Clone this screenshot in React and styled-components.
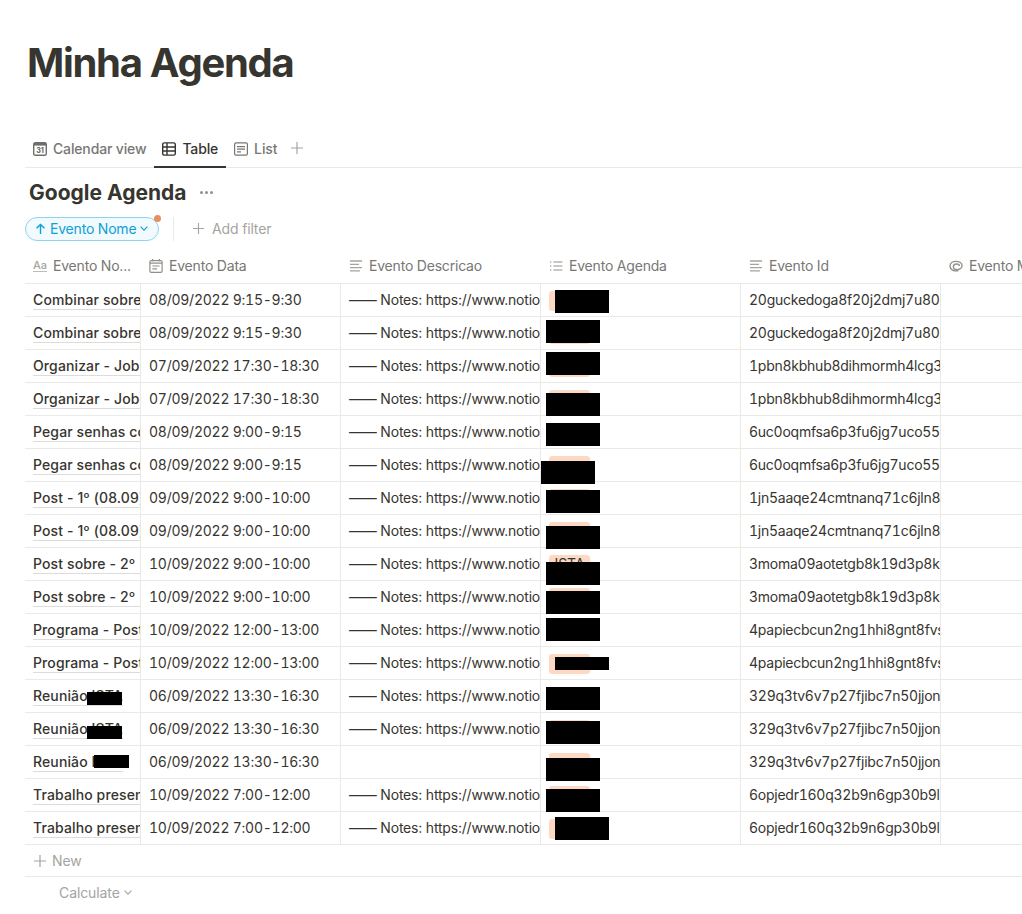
import React from 'react';
import styled, { createGlobalStyle } from 'styled-components';

const GlobalStyle = createGlobalStyle`
  html, body {
    margin: 0;
    padding: 0;
    background: #fff;
    overflow: hidden;
  }
  body {
    font-family: Inter, "Liberation Sans", sans-serif;
    color: #37352f;
  }
`;

const Page = styled.div`
  width: 1022px;
  height: 914px;
  padding: 39px 0 0 25px;
  box-sizing: border-box;
  overflow: hidden;
`;

const Title = styled.h1`
  margin: 0 0 44px 2px;
  height: 48px;
  font-size: 40px;
  line-height: 48px;
  font-weight: 700;
  letter-spacing: -1.3px;
`;

const Tabs = styled.div`
  display: flex;
  align-items: stretch;
  height: 36px;
  box-sizing: content-box;
  border-bottom: 1px solid #e9e9e7;
`;

const Tab = styled.div`
  display: flex;
  align-items: center;
  gap: 6px;
  padding: 0 8px;
  margin-bottom: -1px;
  font-size: 14px;
  font-weight: 500;
  letter-spacing: -0.15px;
  color: ${p => (p.$active ? '#37352f' : '#787774')};
  border-bottom: 2px solid ${p => (p.$active ? '#37352f' : 'transparent')};
`;

const TabAdd = styled.div`
  display: flex;
  align-items: center;
  margin-left: 5px;
  margin-bottom: 2px;
  color: #a5a4a0;
`;

const HeadingRow = styled.div`
  display: flex;
  align-items: center;
  gap: 14px;
  height: 49px;
  padding: 0 0 1px 4px;
  box-sizing: border-box;
`;

const Heading = styled.h2`
  margin: 0;
  font-size: 21px;
  font-weight: 700;
`;

const Dots = styled.div`
  display: flex;
  gap: 2px;
  margin-top: 1px;
  span {
    width: 3px;
    height: 3px;
    border-radius: 50%;
    background: #91908c;
  }
`;

const FilterRow = styled.div`
  display: flex;
  align-items: center;
  height: 24px;
  margin-bottom: 9px;
`;

const SortPill = styled.div`
  position: relative;
  display: flex;
  align-items: center;
  gap: 4px;
  width: 134px;
  height: 24px;
  padding: 0 0 1px 9px;
  box-sizing: border-box;
  border: 1px solid #8fd3ee;
  border-radius: 12px;
  background: #f1fafd;
  color: #0d9fd8;
  font-size: 14px;
  letter-spacing: -0.2px;
`;

const SortDot = styled.span`
  position: absolute;
  top: -3px;
  right: -3px;
  width: 7px;
  height: 7px;
  border-radius: 50%;
  background: #e8905c;
`;

const Divider = styled.div`
  width: 1px;
  height: 24px;
  margin: 0 18px 0 14px;
  background: #e9e9e7;
`;

const AddFilter = styled.div`
  display: flex;
  align-items: center;
  gap: 7px;
  padding-bottom: 1px;
  color: #a5a4a0;
  font-size: 14px;
  letter-spacing: -0.15px;
`;

const HeaderRow = styled.div`
  display: flex;
  height: 33px;
  box-sizing: content-box;
  border-bottom: 1px solid #e9e9e7;
`;

const HeaderCell = styled.div`
  display: flex;
  align-items: center;
  flex: none;
  gap: 6px;
  width: ${p => p.$width}px;
  padding: 0 0 2px 8px;
  box-sizing: border-box;
  color: #787774;
  font-size: 14px;
  letter-spacing: -0.2px;
  white-space: nowrap;
  overflow: hidden;
`;

const AaIcon = styled.span`
  width: 14px;
  font-size: 11px;
  line-height: 11px;
  font-weight: 500;
  letter-spacing: 0;
  color: #a5a4a0;
  border-bottom: 1px solid #bdbcb9;
`;

const Row = styled.div`
  display: flex;
  height: 33px;
  box-sizing: border-box;
  border-bottom: 1px solid #e9e9e7;
`;

const Cell = styled.div`
  position: relative;
  flex: none;
  width: ${p => p.$width}px;
  padding-left: 8px;
  box-sizing: border-box;
  border-right: 1px solid #e9e9e7;
  font-size: 14px;
  line-height: 32px;
  white-space: nowrap;
`;

const TextCell = styled(Cell)`
  overflow: hidden;
  letter-spacing: -0.2px;
`;

const NumberCell = styled(Cell)`
  overflow: hidden;
  font-variant-numeric: tabular-nums;
  letter-spacing: -0.25px;
`;

const BlankCell = styled.div`
  flex: 1;
`;

const Clip = styled.div`
  overflow: hidden;
`;

const NameText = styled.span`
  font-weight: 500;
  letter-spacing: 0.12px;
  border-bottom: 1px solid #dcdcda;
  padding-bottom: 1px;
`;

const Tag = styled.span`
  position: absolute;
  left: 8px;
  top: 7px;
  width: 41px;
  height: 20px;
  border-radius: 3px;
  background: #fdd9c4;
  font-size: 14px;
  line-height: 17px;
  text-align: center;
`;

const Redaction = styled.div`
  position: absolute;
  z-index: 2;
  left: ${p => p.$x}px;
  top: ${p => p.$y}px;
  width: ${p => p.$w}px;
  height: ${p => p.$h}px;
  background: #000;
`;

const NewRow = styled.div`
  display: flex;
  align-items: center;
  gap: 5px;
  height: 32px;
  padding-left: 8px;
  box-sizing: border-box;
  border-bottom: 1px solid #e9e9e7;
  color: #a5a4a0;
  font-size: 14px;
  letter-spacing: -0.1px;
`;

const Calculate = styled.div`
  display: flex;
  align-items: center;
  gap: 4px;
  height: 32px;
  padding: 0 0 2px 34px;
  box-sizing: border-box;
  color: #a5a4a0;
  font-size: 14px;
  letter-spacing: -0.1px;
`;

const Plus = ({ size = 14, color = 'currentColor' }) => (
  <svg width={size} height={size} viewBox="0 0 14 14" fill="none" stroke={color} strokeWidth="1.2">
    <path d="M7 1v12M1 7h12" />
  </svg>
);

const Chevron = ({ width = 8, color = 'currentColor' }) => (
  <svg width={width} height={width * 0.625} viewBox="0 0 8 5" fill="none" stroke={color} strokeWidth="1.1">
    <path d="M.6.7 4 4.1 7.4.7" />
  </svg>
);

const CalendarViewIcon = () => (
  <svg width="14" height="14" viewBox="0 0 14 14" fill="none">
    <rect x=".7" y=".7" width="12.6" height="12.6" rx="1.6" stroke="#6f6e69" strokeWidth="1.4" />
    <rect x="1" y="1" width="12" height="2.6" fill="#6f6e69" />
    <text x="7" y="11" textAnchor="middle" fontSize="7" fontWeight="800" fill="#6f6e69" fontFamily="Inter, sans-serif">31</text>
  </svg>
);

const TableIcon = () => (
  <svg width="14" height="14" viewBox="0 0 14 14" fill="none" stroke="#37352f" strokeWidth="1.4">
    <rect x=".7" y=".9" width="12.6" height="12.2" rx="1.6" />
    <path d="M.7 5h12.6M.7 9h12.6M5 .9v12.2" />
  </svg>
);

const ListViewIcon = () => (
  <svg width="14" height="14" viewBox="0 0 14 14" fill="none" stroke="#787774" strokeWidth="1.2">
    <rect x=".6" y=".9" width="12.8" height="12.2" rx="1.4" />
    <path d="M3 4.6h8M3 7.2h8M3 9.8h4" />
  </svg>
);

const DateIcon = () => (
  <svg width="14" height="14" viewBox="0 0 14 14" fill="none" stroke="#91908c" strokeWidth="1.2">
    <rect x=".9" y="1.6" width="12.2" height="11.8" rx="1.4" />
    <path d="M.9 4.2h12.2M3.6 0v2.2M10.4 0v2.2M3.4 7h7.2M3.4 9.8h4.6" />
  </svg>
);

const TextIcon = () => (
  <svg width="14" height="14" viewBox="0 0 14 14" fill="none" stroke="#a5a4a0" strokeWidth="1.3">
    <path d="M1 2h12M1 5.3h9M1 8.6h12M1 11.9h10" />
  </svg>
);

const BulletIcon = () => (
  <svg width="14" height="14" viewBox="0 0 14 14" fill="none" stroke="#91908c" strokeWidth="1.2">
    <path d="M4.4 3h9M4.4 7h9M4.4 11h9M1 3h1.4M1 7h1.4M1 11h1.4" />
  </svg>
);

const RelationIcon = () => (
  <svg width="14" height="14" viewBox="0 0 14 14" fill="none" stroke="#91908c" strokeWidth="1.4">
    <path d="M9.5 11.6C5 12.6 1 10.6 1 7.2 1 4.2 3.7 2.4 7 2.4c3.4 0 6 1.7 6 4.2 0 2.4-2.2 4-4.8 4-2.2 0-3.8-1.2-3.8-2.9 0-1.6 1.4-2.7 3.2-2.7 1.6 0 2.8.9 2.8 2.1" />
  </svg>
);

const ArrowUp = () => (
  <svg width="11" height="12" viewBox="0 0 11 12" fill="none" stroke="#0d9fd8" strokeWidth="1.4">
    <path d="M5.5 11V1.5M1.5 5.3 5.5 1.4l4 3.9" />
  </svg>
);

const columns = [116, 200, 200, 200, 200];

const notes = '—— Notes: https://www.notion.so/agenda';

// box: x, y, w, h of the black box inside its cell
const rows = [
  { name: 'Combinar sobre a reunião', date: '08/09/2022 9:15-9:30', id: '20guckedoga8f20j2dmj7u80ks', box: [14, 6, 54, 23] },
  { name: 'Combinar sobre a reunião', date: '08/09/2022 9:15-9:30', id: '20guckedoga8f20j2dmj7u80ks', box: [5, 3, 54, 23] },
  { name: 'Organizar - Jobs da semana', date: '07/09/2022 17:30-18:30', id: '1pbn8kbhub8dihmormh4lcg3ks', box: [5, 2, 54, 23] },
  { name: 'Organizar - Jobs da semana', date: '07/09/2022 17:30-18:30', id: '1pbn8kbhub8dihmormh4lcg3ks', box: [5, 10, 54, 23] },
  { name: 'Pegar senhas com equipe', date: '08/09/2022 9:00-9:15', id: '6uc0oqmfsa6p3fu6jg7uco55ks', box: [5, 7, 54, 23] },
  { name: 'Pegar senhas com equipe', date: '08/09/2022 9:00-9:15', id: '6uc0oqmfsa6p3fu6jg7uco55ks', box: [0, 12, 54, 23] },
  { name: 'Post - 1º (08.09) sobre', date: '09/09/2022 9:00-10:00', id: '1jn5aaqe24cmtnanq71c6jln8s', box: [5, 8, 54, 23] },
  { name: 'Post - 1º (08.09) sobre', date: '09/09/2022 9:00-10:00', id: '1jn5aaqe24cmtnanq71c6jln8s', box: [5, 11, 54, 23] },
  { name: 'Post sobre - 2º (10.09)', date: '10/09/2022 9:00-10:00', id: '3moma09aotetgb8k19d3p8ks', box: [5, 14, 54, 23], tag: 'ISTA' },
  { name: 'Post sobre - 2º (10.09)', date: '10/09/2022 9:00-10:00', id: '3moma09aotetgb8k19d3p8ks', box: [5, 10, 54, 23] },
  { name: 'Programa - Post final', date: '10/09/2022 12:00-13:00', id: '4papiecbcun2ng1hhi8gnt8fvs', box: [5, 4, 54, 23] },
  { name: 'Programa - Post final', date: '10/09/2022 12:00-13:00', id: '4papiecbcun2ng1hhi8gnt8fvs', box: [14, 10, 54, 13] },
  { name: 'Reunião ISTA', date: '06/09/2022 13:30-16:30', id: '329q3tv6v7p27fjibc7n50jjons', box: [5, 7, 54, 23], nameBox: [62, 12, 35, 13] },
  { name: 'Reunião ISTA', date: '06/09/2022 13:30-16:30', id: '329q3tv6v7p27fjibc7n50jjons', box: [5, 8, 54, 23], nameBox: [62, 13, 35, 13] },
  { name: 'Reunião ISTA', date: '06/09/2022 13:30-16:30', id: '329q3tv6v7p27fjibc7n50jjons', box: [5, 12, 54, 23], nameBox: [69, 9, 35, 13], noNotes: true },
  { name: 'Trabalho presencial', date: '10/09/2022 7:00-12:00', id: '6opjedr160q32b9n6gp30b9lks', box: [5, 10, 54, 23] },
  { name: 'Trabalho presencial', date: '10/09/2022 7:00-12:00', id: '6opjedr160q32b9n6gp30b9lks', box: [14, 5, 54, 23] },
];

const Box = ({ box }) => <Redaction $x={box[0]} $y={box[1]} $w={box[2]} $h={box[3]} />;

export default function App() {
  return (
    <Page>
      <GlobalStyle />
      <Title>Minha Agenda</Title>

      <Tabs>
        <Tab><CalendarViewIcon />Calendar view</Tab>
        <Tab $active><TableIcon />Table</Tab>
        <Tab><ListViewIcon />List</Tab>
        <TabAdd><Plus /></TabAdd>
      </Tabs>

      <HeadingRow>
        <Heading>Google Agenda</Heading>
        <Dots><span /><span /><span /></Dots>
      </HeadingRow>

      <FilterRow>
        <SortPill>
          <ArrowUp />
          Evento Nome
          <Chevron color="#0d9fd8" />
          <SortDot />
        </SortPill>
        <Divider />
        <AddFilter><Plus size={13} />Add filter</AddFilter>
      </FilterRow>

      <HeaderRow>
        <HeaderCell $width={columns[0]}><AaIcon>Aa</AaIcon>Evento No...</HeaderCell>
        <HeaderCell $width={columns[1]}><DateIcon />Evento Data</HeaderCell>
        <HeaderCell $width={columns[2]}><TextIcon />Evento Descricao</HeaderCell>
        <HeaderCell $width={columns[3]}><BulletIcon />Evento Agenda</HeaderCell>
        <HeaderCell $width={columns[4]}><TextIcon />Evento Id</HeaderCell>
        <HeaderCell $width={200}><RelationIcon />Evento Meet</HeaderCell>
      </HeaderRow>

      {rows.map((row, i) => (
        <Row key={i}>
          <Cell $width={columns[0]}>
            <Clip>
              <NameText>{row.name}</NameText>
            </Clip>
            {row.nameBox && <Box box={row.nameBox} />}
          </Cell>
          <NumberCell $width={columns[1]}>{row.date}</NumberCell>
          <TextCell $width={columns[2]}>{row.noNotes ? '' : notes}</TextCell>
          <Cell $width={columns[3]}>
            <Tag>{row.tag}</Tag>
            <Box box={row.box} />
          </Cell>
          <NumberCell $width={columns[4]}>{row.id}</NumberCell>
          <BlankCell />
        </Row>
      ))}

      <NewRow><Plus />New</NewRow>
      <Calculate>Calculate <Chevron /></Calculate>
    </Page>
  );
}
